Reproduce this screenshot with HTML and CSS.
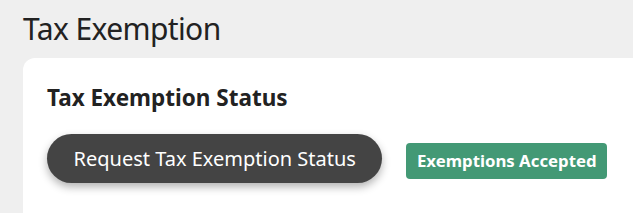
FILE: index.html
```html
<!DOCTYPE html>
<html lang="en">

<head>
    <meta charset="utf8">
    <title>Tax Exemption</title>

    <link rel="stylesheet" href="styles.css">
</head>

<body>
    <div class="page">
        <h1 class="page-title">Tax Exemption</h1>

        <div class="card">
            <h2 class="card-title">Tax Exemption Status</h2>
            <div class="status-row">
                <button class="request-btn">Request Tax Exemption Status</button>
                <span class="badge accepted">Exemptions Accepted</span>
            </div>
        </div>
    </div>
</body>

</html>
```

FILE: styles.css
```css
* {
    box-sizing: border-box;
}

body {
    margin: 0;
    font-family: "Noto Sans", "Open Sans", sans-serif;
    color: #222;
    background-color: #efefef;
    overflow: hidden;
}

.page {
    padding: 9px 0 0 23px;
}

.page-title {
    font-size: 30px;
    font-weight: 400;
    letter-spacing: -0.6px;
    margin: 0;
    height: 49px;
    line-height: 40px;
}

.card {
    background-color: white;
    border-radius: 12px 0 0 0;
    padding: 26px 0 40px 24px;
    min-height: 160px;
}

.card-title {
    font-size: 22.5px;
    font-weight: 700;
    margin: 0 0 22px 0;
    line-height: 28px;
}

.status-row {
    display: flex;
    align-items: center;
    column-gap: 24px;
}

.request-btn {
    flex-shrink: 0;
    white-space: nowrap;
    font-family: inherit;
    font-size: 20px;
    color: white;
    background-color: #444;
    border: 0 none;
    border-radius: 25px;
    height: 49px;
    padding: 0 26.5px;
    box-shadow: 0 4px 8px rgba(0, 0, 0, 0.3);
    cursor: pointer;
}

.badge {
    flex-shrink: 0;
    white-space: nowrap;
    font-size: 16.8px;
    font-weight: 700;
    color: white;
    border-radius: 4px;
    padding: 0 10.5px;
    height: 36px;
    line-height: 36px;
    margin-top: 5px;
}

.badge.accepted {
    background-color: #439975;
}
```
